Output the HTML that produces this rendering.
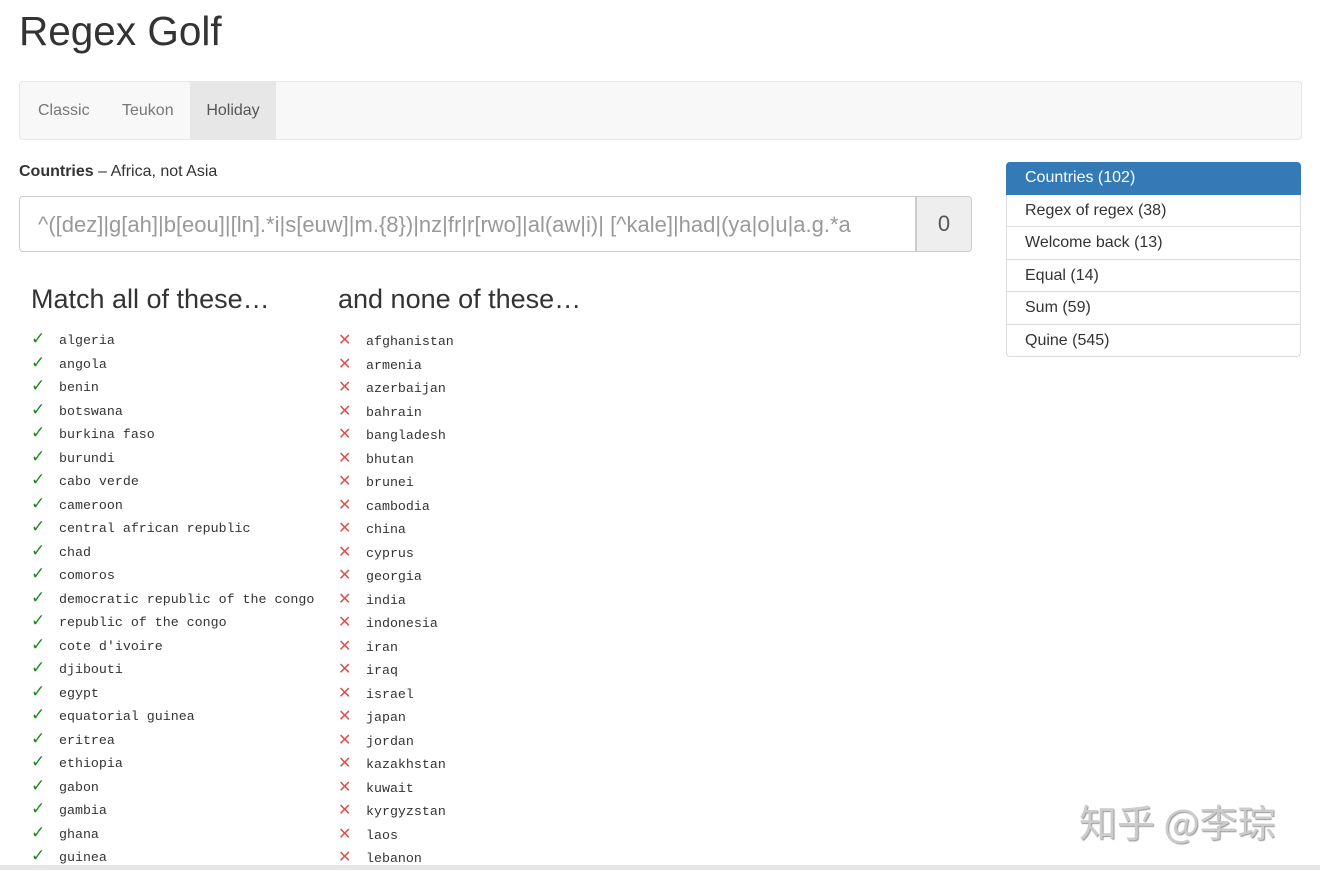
<!DOCTYPE html>
<html><head><meta charset="utf-8"><style>
body{margin:0;width:1320px;height:870px;overflow:hidden;background:#fff;font-family:"Liberation Sans",sans-serif;color:#333;position:relative}
h1{position:absolute;left:19px;top:8px;margin:0;font-size:40.5px;font-weight:normal;color:#333}
.nav{position:absolute;left:19px;top:81px;width:1281px;height:57px;background:#f8f8f8;border:1px solid #e7e7e7;border-radius:4px}
.nav span{position:absolute;top:0;height:57px;line-height:57px;font-size:16px;color:#777}
.sub{position:absolute;left:19px;top:163px;font-size:16px}
.inp{position:absolute;left:19px;top:196px;width:897px;height:56px;border:1px solid #ccc;border-radius:4px 0 0 4px;font-size:22px;color:#999;line-height:56px;padding-left:18px;box-sizing:border-box;overflow:hidden;white-space:nowrap}
.cnt{position:absolute;left:916px;top:196px;width:56px;height:56px;border:1px solid #ccc;border-radius:0 4px 4px 0;background:#eee;box-sizing:border-box;text-align:center;line-height:54px;font-size:22px;color:#555}
h2{position:absolute;top:284px;margin:0;font-size:27px;font-weight:normal;color:#333}
.list{position:absolute;top:328px;margin:0;padding:0;list-style:none;font-family:"Liberation Mono",monospace;font-size:13.3px;color:#333}
.list li{height:23.5px;line-height:23.5px;white-space:nowrap}
.list b{display:inline-block;width:28px;font-family:"DejaVu Sans",sans-serif;font-size:17px}
.ok b{color:#1e8a1e;font-weight:bold}.no b{color:#d9534f;font-size:16px;font-weight:normal}
.side{position:absolute;left:1006px;top:162px;width:295px}
.side div{height:32.5px;line-height:32px;border:1px solid #ddd;border-top:none;padding-left:18px;font-size:16px;box-sizing:border-box}
.side div:first-child{background:#337ab7;color:#fff;border-color:#337ab7;border-radius:4px 4px 0 0}
.side div:last-child{border-radius:0 0 4px 4px}
.wm{position:absolute;left:1079px;top:793px;font-size:38px;color:#ccc;font-family:"Noto Sans CJK SC",sans-serif;text-shadow:1px 1px 1px #999}
.bot{position:absolute;left:0;top:865px;width:1320px;height:5px;background:#e6e6e6}
</style></head><body>
<h1>Regex Golf</h1>
<div class="nav"><span style="left:18px">Classic</span><span style="left:102px">Teukon</span><span style="left:170px;width:86px;background:#e7e7e7;color:#555;text-align:center">Holiday</span></div>
<div class="sub"><b>Countries</b> – Africa, not Asia</div>
<div class="inp">^([dez]|g[ah]|b[eou]|[ln].*i|s[euw]|m.{8})|nz|fr|r[rwo]|al(aw|i)| [^kale]|had|(ya|o|u|a.g.*a</div>
<div class="cnt">0</div>
<h2 style="left:31px">Match all of these…</h2>
<h2 style="left:338px">and none of these…</h2>
<ul class="list ok" style="left:31px">
<li><b>✓</b>algeria</li><li><b>✓</b>angola</li><li><b>✓</b>benin</li><li><b>✓</b>botswana</li><li><b>✓</b>burkina faso</li><li><b>✓</b>burundi</li><li><b>✓</b>cabo verde</li><li><b>✓</b>cameroon</li><li><b>✓</b>central african republic</li><li><b>✓</b>chad</li><li><b>✓</b>comoros</li><li><b>✓</b>democratic republic of the congo</li><li><b>✓</b>republic of the congo</li><li><b>✓</b>cote d'ivoire</li><li><b>✓</b>djibouti</li><li><b>✓</b>egypt</li><li><b>✓</b>equatorial guinea</li><li><b>✓</b>eritrea</li><li><b>✓</b>ethiopia</li><li><b>✓</b>gabon</li><li><b>✓</b>gambia</li><li><b>✓</b>ghana</li><li><b>✓</b>guinea</li>
</ul>
<ul class="list no" style="left:338px">
<li><b>✕</b>afghanistan</li><li><b>✕</b>armenia</li><li><b>✕</b>azerbaijan</li><li><b>✕</b>bahrain</li><li><b>✕</b>bangladesh</li><li><b>✕</b>bhutan</li><li><b>✕</b>brunei</li><li><b>✕</b>cambodia</li><li><b>✕</b>china</li><li><b>✕</b>cyprus</li><li><b>✕</b>georgia</li><li><b>✕</b>india</li><li><b>✕</b>indonesia</li><li><b>✕</b>iran</li><li><b>✕</b>iraq</li><li><b>✕</b>israel</li><li><b>✕</b>japan</li><li><b>✕</b>jordan</li><li><b>✕</b>kazakhstan</li><li><b>✕</b>kuwait</li><li><b>✕</b>kyrgyzstan</li><li><b>✕</b>laos</li><li><b>✕</b>lebanon</li>
</ul>
<div class="side"><div>Countries (102)</div><div>Regex of regex (38)</div><div>Welcome back (13)</div><div>Equal (14)</div><div>Sum (59)</div><div>Quine (545)</div></div>
<div class="wm">知乎 @李琮</div>
<div class="bot"></div>
</body></html>
